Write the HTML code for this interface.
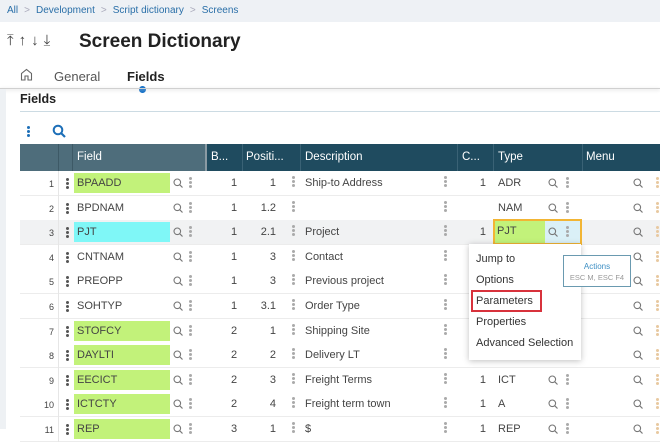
<!DOCTYPE html>
<html><head><meta charset="utf-8"><style>
*{margin:0;padding:0;box-sizing:border-box}
body{width:660px;height:429px;overflow:hidden;background:#fff;font-family:"Liberation Sans",sans-serif;position:relative;color:#333}
.a{position:absolute;white-space:nowrap}
.bc{left:0;top:0;width:660px;height:22px;background:#eef1f5;font-size:10px;color:#2a6fa8;padding:5px 0 0 7px}
.bc span{color:#aab;margin:0 6px}
.k{position:absolute;width:3px;height:11px}
.k i{display:block;width:3px;height:3px;border-radius:50%;background:#555;margin-bottom:1px}
.row{position:absolute;left:20px;width:640px;height:25px;border-bottom:1px solid #ececec;font-size:11px;color:#444}
.row .a{top:6px}
.mg{position:absolute;width:10px;height:10px}
</style></head><body>
<div class="a bc">All<span>&gt;</span>Development<span>&gt;</span>Script dictionary<span>&gt;</span>Screens</div>
<div class="a" style="left:7px;top:32px;font-size:15px;color:#444;letter-spacing:5px">⤒↑↓⤓</div>
<div class="a" style="left:79px;top:31px;font-size:19px;font-weight:bold;color:#222">Screen Dictionary</div>
<svg class="a" style="left:20px;top:68px" width="13" height="13" viewBox="0 0 13 13"><path d="M1.5 12V5.5L6.5 1.5L11.5 5.5V12H8V8H5V12Z" fill="none" stroke="#666" stroke-width="1.1"/></svg>
<div class="a" style="left:54px;top:69px;font-size:13px;color:#555">General</div>
<div class="a" style="left:127px;top:69px;font-size:13px;font-weight:bold;color:#222">Fields</div>
<div class="a" style="left:139px;top:86px;width:7px;height:7px;border-radius:50%;background:#0a6cc8"></div>
<div class="a" style="left:0;top:88px;width:660px;height:1px;background:#d0d0d0;box-shadow:0 1px 3px #ccc"></div>
<div class="a" style="left:0;top:89px;width:6px;height:340px;background:#eef1f4"></div>
<div class="a" style="left:20px;top:92px;font-size:12.5px;font-weight:bold;color:#222">Fields</div>
<div class="a" style="left:20px;top:111px;width:640px;height:1px;background:#ccdbe3"></div>
<div class="k" style="left:27px;top:126px"><i style="background:#1d6fb8"></i><i style="background:#1d6fb8"></i><i style="background:#1d6fb8"></i></div>
<svg class="a" style="left:52px;top:124px" width="14" height="14" viewBox="0 0 14 14"><circle cx="6" cy="6" r="4.3" fill="none" stroke="#1d6fb8" stroke-width="2"/><path d="M9 9L13 13" stroke="#1d6fb8" stroke-width="2.2"/></svg>
<div class="a" style="left:20px;top:144px;width:186px;height:27px;background:#4e6d7b"></div>
<div class="a" style="left:58px;top:144px;width:1px;height:27px;background:#3d5966"></div>
<div class="a" style="left:72px;top:144px;width:1px;height:27px;background:#3d5966"></div>
<div class="a" style="left:206px;top:144px;width:454px;height:27px;background:#1f4b5f"></div>
<div class="a" style="left:205px;top:144px;width:2px;height:285px;background:#8a9aa3"></div>
<div class="a" style="left:77px;top:151px;font-size:11.5px;color:#fff">Field</div>
<div class="a" style="left:211px;top:151px;font-size:11.5px;color:#fff">B...</div>
<div class="a" style="left:246px;top:151px;font-size:11.5px;color:#fff">Positi...</div>
<div class="a" style="left:305px;top:151px;font-size:11.5px;color:#fff">Description</div>
<div class="a" style="left:462px;top:151px;font-size:11.5px;color:#fff">C...</div>
<div class="a" style="left:498px;top:151px;font-size:11.5px;color:#fff">Type</div>
<div class="a" style="left:586px;top:151px;font-size:11.5px;color:#fff">Menu</div>
<div class="a" style="left:242px;top:144px;width:1px;height:27px;background:#3a6275"></div>
<div class="a" style="left:300px;top:144px;width:1px;height:27px;background:#3a6275"></div>
<div class="a" style="left:457px;top:144px;width:1px;height:27px;background:#3a6275"></div>
<div class="a" style="left:493px;top:144px;width:1px;height:27px;background:#3a6275"></div>
<div class="a" style="left:582px;top:144px;width:1px;height:27px;background:#3a6275"></div>
<div id="rows"></div>
<script>
var d=[["BPAADD","g","1","1","Ship-to Address","1","ADR"],["BPDNAM","","1","1.2","","","NAM"],["PJT","c","1","2.1","Project","1","PJT"],["CNTNAM","","1","3","Contact","",""],["PREOPP","","1","3","Previous project","",""],["SOHTYP","","1","3.1","Order Type","",""],["STOFCY","g","2","1","Shipping Site","",""],["DAYLTI","g","2","2","Delivery LT","",""],["EECICT","g","2","3","Freight Terms","1","ICT"],["ICTCTY","g","2","4","Freight term town","1","A"],["REP","g","3","1","$","1","REP"]];
var K='<i></i><i></i><i></i>',L='<i style="background:#aaa"></i><i style="background:#aaa"></i><i style="background:#aaa"></i>';
function mg(x){return '<svg class="mg" style="left:'+x+'px;top:7px" viewBox="0 0 10 10"><circle cx="4.3" cy="4.3" r="3.3" fill="none" stroke="#777" stroke-width="1.1"/><path d="M6.7 6.7L9.5 9.5" stroke="#777" stroke-width="1.2"/></svg>';}
var h='';
d.forEach(function(r,i){var t=Math.round(171+i*24.6);var bg=i==2?'#f1f2f3':'#fff';
h+='<div class="row" style="top:'+t+'px;background:'+bg+'">';
h+='<div class="a" style="left:0;width:34px;text-align:right;font-size:9px;top:8px">'+(i+1)+'</div>';
h+='<div style="position:absolute;left:38px;top:0;width:1px;height:25px;background:#e6e6e6"></div>';
h+='<div class="k" style="left:46px;top:7px">'+K+'</div>';
var fb=r[1]=='g'?'#c2f27a':r[1]=='c'?'#7ff7f7':'transparent';
h+='<div class="a" style="left:54px;top:2px;width:96px;height:20px;background:'+fb+';padding:4px 3px;font-size:11px">'+r[0]+'</div>';
h+=mg(153)+'<div class="k" style="left:169px;top:6px">'+L+'</div>';
h+='<div class="a" style="left:211px">'+r[2]+'</div>';
h+='<div class="a" style="left:200px;width:56px;text-align:right">'+r[3]+'</div>';
h+='<div class="k" style="left:272px;top:5px">'+L+'</div>';
h+='<div class="a" style="left:285px">'+r[4]+'</div>';
h+='<div class="k" style="left:424px;top:5px">'+L+'</div>';
if(i<3||i>7){h+='<div class="a" style="left:440px;width:26px;text-align:right">'+r[5]+'</div>';
if(i==2){h+='<div class="a" style="left:473px;top:-1px;width:89px;height:26px;border:2px solid #f2b534;background:#daf0f7"></div><div class="a" style="left:475px;top:1px;width:50px;height:22px;background:#c2f27a;padding:4px 2px">PJT</div>';}
else h+='<div class="a" style="left:478px">'+r[6]+'</div>';
h+=mg(528)+'<div class="k" style="left:546px;top:6px">'+L+'</div>';}
h+=mg(613)+'<div class="k" style="left:636px;top:6px"><i style="background:#e8c9a0"></i><i style="background:#e8c9a0"></i><i style="background:#e8c9a0"></i></div>';
h+='</div>';});
document.getElementById('rows').innerHTML=h;
</script>
<div class="a" style="left:469px;top:244px;width:112px;height:116px;background:#fff;box-shadow:0 1px 6px rgba(0,0,0,.25);font-size:11px;color:#333">
<div class="a" style="left:7px;top:9px">Jump to</div>
<div class="a" style="left:7px;top:30px">Options</div>
<div class="a" style="left:2px;top:46px;width:71px;height:22px;border:2px solid #d8323c"></div>
<div class="a" style="left:7px;top:51px">Parameters</div>
<div class="a" style="left:7px;top:72px">Properties</div>
<div class="a" style="left:7px;top:93px">Advanced Selection</div>
</div>
<div class="a" style="left:563px;top:255px;width:68px;height:32px;background:#fff;border:1px solid #6a9ab0;text-align:center">
<div style="font-size:8px;color:#3d8fc4;margin-top:6px">Actions</div>
<div style="font-size:7.5px;color:#999;margin-top:2px">ESC M, ESC F4</div>
</div>
</body></html>
